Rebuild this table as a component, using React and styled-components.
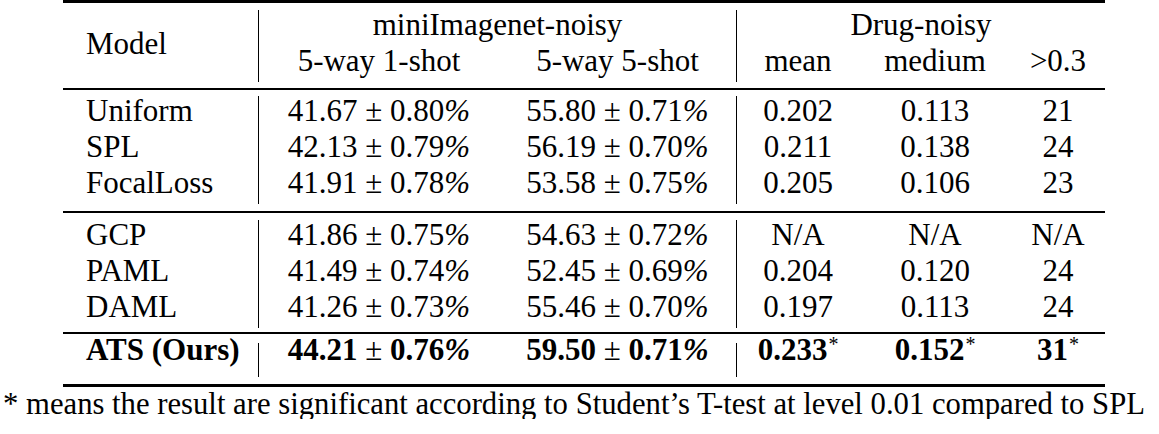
import React from 'react';
import styled, { createGlobalStyle } from 'styled-components';

const Global = createGlobalStyle`
  html, body { margin: 0; padding: 0; background: #fff; }
  html body #root, html body #root * {
    font-family: "Liberation Serif", serif !important;
  }
`;

const Page = styled.div`
  font-family: "Liberation Serif", serif;
  color: #000;
`;

const Table = styled.div`
  margin-left: 63px;
  width: 1042px;
`;

const Rule = styled.div`
  height: ${(p) => p.$w}px;
  background: #000;
`;

const Section = styled.div`
  display: grid;
  grid-template-columns: 196px 240px 238px 122px 152px 94px;
  padding: ${(p) => p.$pt}px 0 ${(p) => p.$pb}px;
`;

const Cell = styled.div`
  font-family: "Liberation Serif", serif;
  font-size: 31px;
  line-height: ${(p) => (p.$tight ? '14px' : '29px')};
  padding-bottom: ${(p) => (p.$tight ? 20 : 7)}px;
  padding-top: ${(p) => p.$pt || 0}px;
  padding-left: ${(p) => (p.$left ? 23 : 0)}px;
  text-align: ${(p) => (p.$left ? 'left' : 'center')};
  border-right: ${(p) => (p.$sep ? '1px solid #000' : 'none')};
  font-weight: ${(p) => (p.$bold ? 700 : 400)};
  grid-column: ${(p) => p.$col || 'auto'};
  grid-row: ${(p) => p.$row || 'auto'};
  white-space: nowrap;
`;

const Pm = styled.span`
  font-weight: 400;
`;

const Pct = styled.span`
  font-style: italic;
`;

const Star = styled.span`
  font-size: 20px;
  font-weight: 400;
  line-height: 0;
  vertical-align: 9px;
  margin-left: 1px;
`;

const Footnote = styled.div`
  font-family: "Liberation Serif", serif;
  margin-top: 3px;
  padding-left: 3px;
  font-size: 30.7px;
  line-height: 29px;
  white-space: nowrap;
`;

const Acc = ({ v, e }) => (
  <>
    {v} <Pm>±</Pm> {e}
    <Pct>%</Pct>
  </>
);

const group1 = [
  ['Uniform', '41.67', '0.80', '55.80', '0.71', '0.202', '0.113', '21'],
  ['SPL', '42.13', '0.79', '56.19', '0.70', '0.211', '0.138', '24'],
  ['FocalLoss', '41.91', '0.78', '53.58', '0.75', '0.205', '0.106', '23'],
];

const group2 = [
  ['GCP', '41.86', '0.75', '54.63', '0.72', 'N/A', 'N/A', 'N/A'],
  ['PAML', '41.49', '0.74', '52.45', '0.69', '0.204', '0.120', '24'],
  ['DAML', '41.26', '0.73', '55.46', '0.70', '0.197', '0.113', '24'],
];

const Row = ({ r }) => (
  <>
    <Cell $left $sep>{r[0]}</Cell>
    <Cell><Acc v={r[1]} e={r[2]} /></Cell>
    <Cell $sep><Acc v={r[3]} e={r[4]} /></Cell>
    <Cell>{r[5]}</Cell>
    <Cell>{r[6]}</Cell>
    <Cell>{r[7]}</Cell>
  </>
);

export default function App() {
  return (
    <Page>
      <Global />
      <Table>
        <Rule $w={3} />
        <Section $pt={7} $pb={6}>
          <Cell $left $sep $row="1 / span 2" $pt={19}>Model</Cell>
          <Cell $sep $col="2 / span 2">miniImagenet-noisy</Cell>
          <Cell $col="4 / span 3">Drug-noisy</Cell>
          <Cell>5-way 1-shot</Cell>
          <Cell $sep>5-way 5-shot</Cell>
          <Cell>mean</Cell>
          <Cell>medium</Cell>
          <Cell>&gt;0.3</Cell>
        </Section>
        <Rule $w={2} />
        <Section $pt={6} $pb={7}>
          {group1.map((r) => (
            <Row key={r[0]} r={r} />
          ))}
        </Section>
        <Rule $w={2} />
        <Section $pt={7} $pb={4}>
          {group2.map((r) => (
            <Row key={r[0]} r={r} />
          ))}
        </Section>
        <Rule $w={2} />
        <Section $pt={9} $pb={7}>
          <Cell $left $sep $bold $tight>ATS (Ours)</Cell>
          <Cell $bold $tight><Acc v="44.21" e="0.76" /></Cell>
          <Cell $sep $bold $tight><Acc v="59.50" e="0.71" /></Cell>
          <Cell $bold $tight>0.233<Star>*</Star></Cell>
          <Cell $bold $tight>0.152<Star>*</Star></Cell>
          <Cell $bold $tight>31<Star>*</Star></Cell>
        </Section>
        <Rule $w={3} />
      </Table>
      <Footnote>* means the result are significant according to Student’s T-test at level 0.01 compared to SPL</Footnote>
    </Page>
  );
}
